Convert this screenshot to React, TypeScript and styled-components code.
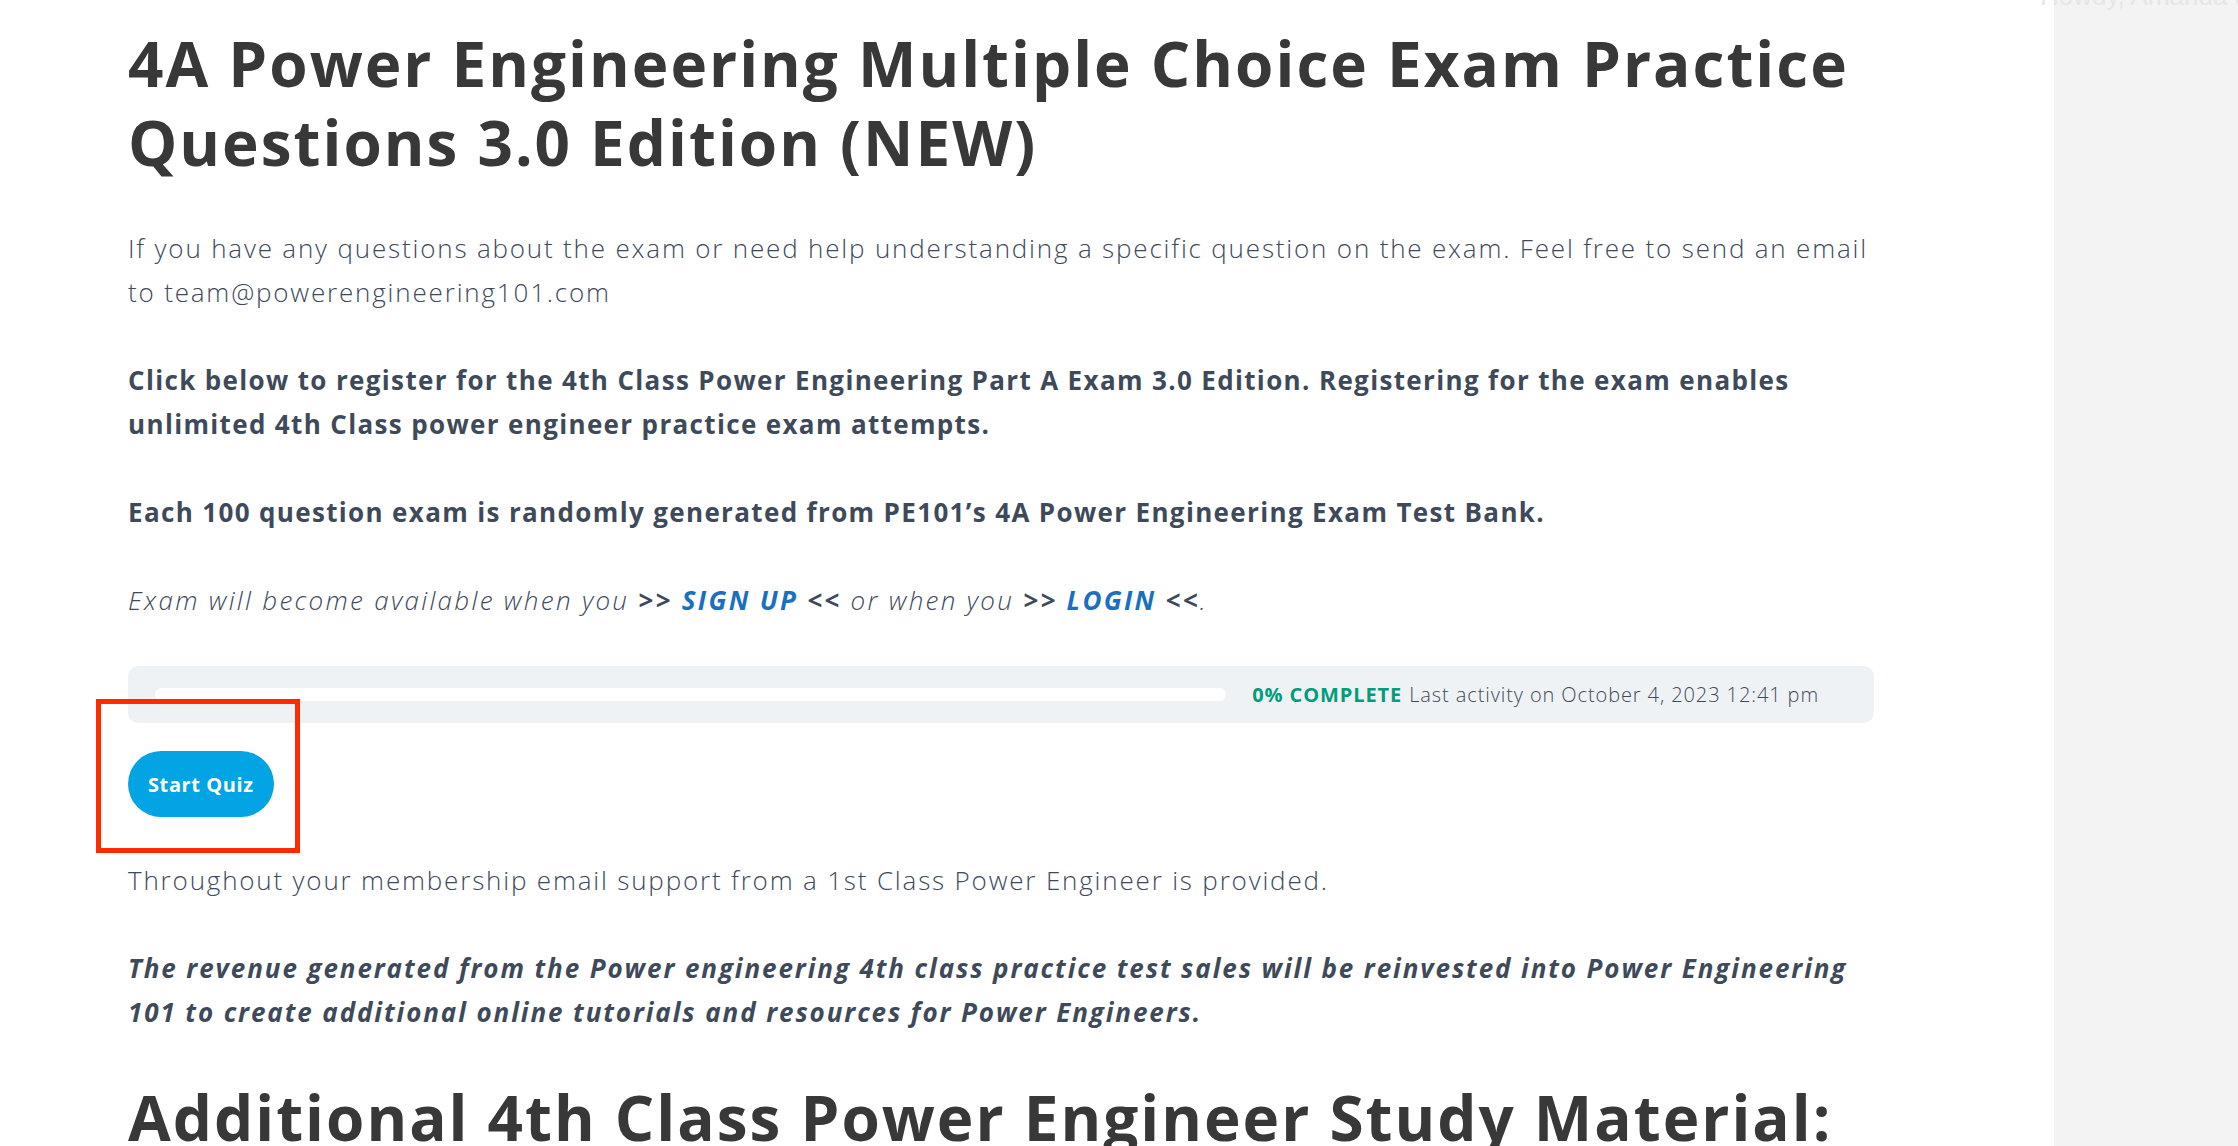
import * as React from 'react';
import styled, { createGlobalStyle } from 'styled-components';

const GlobalStyle = createGlobalStyle`
  html, body {
    margin: 0;
    padding: 0;
    background: #ffffff;
  }
  body {
    font-family: "Open Sans", "Liberation Sans", sans-serif;
    color: #3e4a5a;
  }
`;

const Page = styled.div`
  position: relative;
  display: flex;
  min-height: 100vh;
  overflow: hidden;
`;

const Main = styled.main`
  flex: 1;
  padding: 0 180px 40px 128px;
`;

const Aside = styled.aside`
  width: 184px;
  flex-shrink: 0;
  background: #f3f3f3;
`;

const Greeting = styled.div`
  position: absolute;
  top: -19px;
  left: 2040px;
  font-family: "Liberation Sans", Arial, sans-serif;
  font-size: 26px;
  color: #e6e6e6;
  white-space: nowrap;
`;

const Title = styled.h1<{ $top?: number }>`
  margin: ${(p) => p.$top ?? 0}px 0 0;
  font-size: 62px;
  line-height: 79px;
  font-weight: 700;
  color: #383838;
  letter-spacing: 2px;
`;

const Text = styled.p<{ $bold?: boolean; $italic?: boolean; $top?: number }>`
  margin: ${(p) => p.$top ?? 44}px 0 0;
  font-size: 26px;
  line-height: 44px;
  font-weight: ${(p) => (p.$bold ? 700 : 300)};
  font-style: ${(p) => (p.$italic ? 'italic' : 'normal')};
  color: #3e4a5a;
  letter-spacing: ${(p) => (p.$bold && p.$italic ? '1.9px' : p.$italic ? '2.3px' : p.$bold ? '1.35px' : '1.82px')};
`;

const Strong = styled.strong`
  font-weight: 700;
`;

const Link = styled.a`
  color: #1a6fc0;
  font-weight: 700;
  text-decoration: none;
`;

const Progress = styled.div`
  margin-top: 44px;
  height: 57px;
  display: flex;
  align-items: center;
  padding: 0 55px 0 27px;
  background: #eff2f5;
  border-radius: 10px;
`;

const Track = styled.div`
  flex: 1;
  height: 13px;
  background: #ffffff;
  border-radius: 7px;
  margin-right: 26px;
`;

const Stats = styled.div`
  font-size: 20px;
  font-weight: 300;
  letter-spacing: 0.9px;
  color: #3e4a5a;
  white-space: nowrap;
`;

const Percent = styled.span`
  color: #019d7b;
  font-weight: 700;
  margin-right: 7px;
`;

const ButtonRow = styled.div`
  position: relative;
  margin-top: 28px;
  display: flex;
`;

const StartButton = styled.button`
  height: 66px;
  padding: 0 20px;
  border: none;
  border-radius: 33px;
  background: #02a4e3;
  color: #ffffff;
  font-family: "Open Sans", "Liberation Sans", sans-serif;
  font-size: 20px;
  font-weight: 700;
  letter-spacing: 0.6px;
  cursor: pointer;
`;

const Highlight = styled.div`
  position: absolute;
  left: -32px;
  top: -52px;
  width: 204px;
  height: 154px;
  box-sizing: border-box;
  border: 5px solid #ff2a00;
  pointer-events: none;
`;

export default function App() {
  return (
    <>
      <GlobalStyle />
      <Page>
        <Main>
          <Title $top={24}>4A Power Engineering Multiple Choice Exam Practice Questions 3.0 Edition (NEW)</Title>
          <Text>
            If you have any questions about the exam or need help understanding a specific question on the exam. Feel
            free to send an email to team@powerengineering101.com
          </Text>
          <Text $bold>
            Click below to register for the 4th Class Power Engineering Part A Exam 3.0 Edition. Registering for the
            exam enables unlimited 4th Class power engineer practice exam attempts.
          </Text>
          <Text $bold>Each 100 question exam is randomly generated from PE101’s 4A Power Engineering Exam Test Bank.</Text>
          <Text $italic>
            Exam will become available when you <Strong>&gt;&gt; </Strong>
            <Link href="#">SIGN UP</Link>
            <Strong> &lt;&lt;</Strong> or when you <Strong>&gt;&gt; </Strong>
            <Link href="#">LOGIN</Link>
            <Strong> &lt;&lt;</Strong>.
          </Text>
          <Progress>
            <Track />
            <Stats>
              <Percent>0% COMPLETE</Percent>
              Last activity on October 4, 2023 12:41 pm
            </Stats>
          </Progress>
          <ButtonRow>
            <StartButton>Start Quiz</StartButton>
            <Highlight />
          </ButtonRow>
          <Text $top={41}>
            Throughout your membership email support from a 1st Class Power Engineer is provided.
          </Text>
          <Text $bold $italic>
            The revenue generated from the Power engineering 4th class practice test sales will be reinvested into
            Power Engineering 101 to create additional online tutorials and resources for Power Engineers.
          </Text>
          <Title $top={44}>Additional 4th Class Power Engineer Study Material:</Title>
        </Main>
        <Aside />
        <Greeting>Howdy, Amanda S</Greeting>
      </Page>
    </>
  );
}
